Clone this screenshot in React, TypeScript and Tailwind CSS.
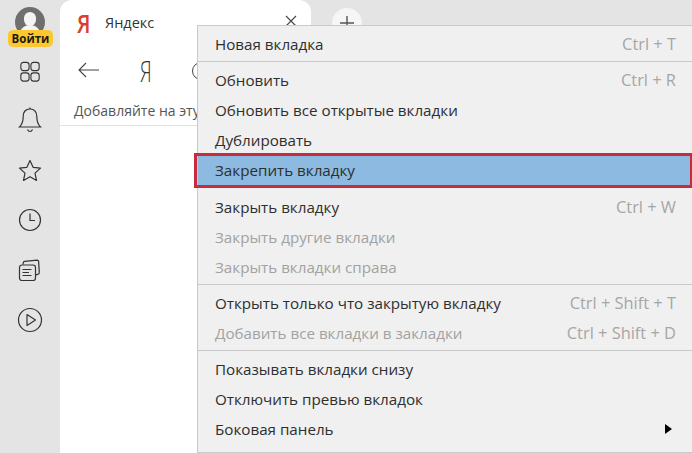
const font = "font-['Open_Sans',sans-serif]";

type Item = { label: string; shortcut?: string; disabled?: boolean; active?: boolean; arrow?: boolean };

const groups: { items: Item[]; line: boolean }[] = [
  { items: [{ label: "Новая вкладка", shortcut: "Ctrl + T" }], line: true },
  {
    items: [
      { label: "Обновить", shortcut: "Ctrl + R" },
      { label: "Обновить все открытые вкладки" },
      { label: "Дублировать" },
      { label: "Закрепить вкладку", active: true },
    ],
    line: false,
  },
  {
    items: [
      { label: "Закрыть вкладку", shortcut: "Ctrl + W" },
      { label: "Закрыть другие вкладки", disabled: true },
      { label: "Закрыть вкладки справа", disabled: true },
    ],
    line: true,
  },
  {
    items: [
      { label: "Открыть только что закрытую вкладку", shortcut: "Ctrl + Shift + T" },
      { label: "Добавить все вкладки в закладки", shortcut: "Ctrl + Shift + D", disabled: true },
    ],
    line: true,
  },
  {
    items: [
      { label: "Показывать вкладки снизу" },
      { label: "Отключить превью вкладок" },
      { label: "Боковая панель", arrow: true },
    ],
    line: false,
  },
];

const MenuRow = ({ item }: { item: Item }) => (
  <div
    className={`relative flex h-[30px] items-center justify-between pb-[2px] pl-[17px] pr-4 text-[15.200px] ${
      item.active ? "bg-[#8cbae0]" : ""
    } ${item.disabled ? "text-[#a2a2a2]" : "text-[#2e2e2e]"}`}
  >
    <span>{item.label}</span>
    {item.shortcut && <span className="text-[16.400px] text-[#a6a6a6]">{item.shortcut}</span>}
    {item.arrow && (
      <svg width="7" height="10" viewBox="0 0 7 10" className="mr-[4px]">
        <path d="M0 0l7 5-7 5z" fill="#000" />
      </svg>
    )}
    {item.active && (
      <div className="absolute -left-[4px] -right-[1px] -top-[3px] -bottom-[2px] border-[3px] border-[#c62c3e]" />
    )}
  </div>
);

const Sidebar = () => (
  <div className="flex w-[60px] shrink-0 flex-col items-center bg-[#e4e4e4] text-[#2b2b2b]">
    <div className="relative h-[50px] w-full">
      <div className="absolute left-[15px] top-[7px] h-[30px] w-[30px] overflow-hidden rounded-full bg-[#6f6f6f]">
        <div className="absolute left-[9px] top-[5px] h-[14px] w-[12px] rounded-full bg-[#f4f4f4]" />
        <div className="absolute left-[4px] top-[18px] h-[14px] w-[22px] rounded-t-full bg-[#f4f4f4]" />
      </div>
      <div className="absolute left-[8px] top-[30px] flex h-[17px] w-[45px] items-center justify-center rounded-[5px] bg-[#fdc82f] text-[11.500px] font-bold leading-none text-[#1e1a10]">
        Войти
      </div>
    </div>
    <svg width="22" height="22" viewBox="0 0 24 24" fill="none" stroke="#333" strokeWidth="1.2" className="mt-[11px]">
      <rect x="2" y="1.500" width="9" height="9" rx="2.800" />
      <rect x="13" y="1.500" width="9" height="9" rx="2.800" />
      <rect x="2" y="13" width="9" height="9" rx="2.800" />
      <rect x="13" y="13" width="9" height="9" rx="2.800" />
    </svg>
    <svg width="24" height="28" viewBox="0 0 24 28" fill="none" stroke="#333" strokeWidth="1.2" className="mt-[23px]">
      <path d="M12 3c-4.500 0-6.800 3.200-6.800 7.500 0 5-1.200 8-3.700 10.500h21c-2.500-2.500-3.700-5.500-3.700-10.500C18.800 6.200 16.500 3 12 3z" />
      <path d="M9.500 23.500c.6 1.500 1.400 2 2.500 2s1.900-.5 2.500-2" />
      <path d="M12 3V1.500" />
    </svg>
    <svg width="24" height="24" viewBox="0 0 24 24" fill="none" stroke="#333" strokeWidth="1.2" strokeLinejoin="round" className="mt-[25px]">
      <path d="M12 1.500l3.100 6.800 7.400.8-5.500 5 1.500 7.300-6.500-3.700-6.500 3.700 1.500-7.300-5.500-5 7.400-.8z" />
    </svg>
    <svg width="24" height="24" viewBox="0 0 24 24" fill="none" stroke="#333" strokeWidth="1.2" className="mt-[25px]">
      <circle cx="12" cy="12" r="10.500" />
      <path d="M12 5.500V12.500h5" />
    </svg>
    <svg width="24" height="24" viewBox="0 0 24 24" fill="none" stroke="#333" strokeWidth="1.2" strokeLinejoin="round" className="mt-[27px]">
      <rect x="1.500" y="6" width="16" height="15.500" rx="2.500" />
      <path d="M5 5.500l.3-1.800c.1-.7.6-1.200 1.300-1.300l12.500-1.200c.8 0 1.400.4 1.500 1.200l.7 11c.1 1-.5 1.700-1.500 1.900l-2 .5" />
      <path d="M4.500 10.500h9M4.500 13.500h6.500M4.500 16.500h9" />
    </svg>
    <svg width="26" height="26" viewBox="0 0 26 26" fill="none" stroke="#333" strokeWidth="1.2" strokeLinejoin="round" className="mt-[24px]">
      <circle cx="13" cy="13" r="11.500" />
      <path d="M10 7.500l8.500 5.500-8.500 5.500z" />
    </svg>
  </div>
);

export default function App() {
  return (
    <div className={`relative flex h-[453px] w-[692px] overflow-hidden bg-[#e4e4e4] ${font}`}>
      <Sidebar />
      <div className="flex min-w-0 flex-1 flex-col">
        {/* Вкладки */}
        <div className="flex h-[46px] shrink-0 items-start">
          <div className="flex h-full w-[251px] items-center rounded-t-[12px] bg-white pb-[1px] pl-[17px] pr-[14px]">
            <span className="w-[28px] origin-left scale-x-[0.8] text-[26px] font-semibold leading-none text-[#d8402f]">Я</span>
            <span className="flex-1 text-[14.500px] text-[#333]">Яндекс</span>
            <svg width="12" height="12" viewBox="0 0 12 12" stroke="#444" strokeWidth="1.100" className="-mt-[3px]">
              <path d="M1 1l10 10M11 1L1 11" />
            </svg>
          </div>
          <div className="ml-[21px] mt-[8px] flex h-[30px] w-[30px] items-center justify-center rounded-full bg-[#f6f6f6]">
            <svg width="14" height="14" viewBox="0 0 14 14" stroke="#555" strokeWidth="1.400">
              <path d="M7 0v14M0 7h14" />
            </svg>
          </div>
        </div>
        {/* Тулбар и закладки */}
        <div className="flex min-h-0 flex-1 flex-col bg-white">
          <div className="flex h-[50px] items-center pl-[18px]">
            <svg width="22" height="16" viewBox="0 0 22 16" fill="none" stroke="#444" strokeWidth="1.100" className="mt-[-2px]">
              <path d="M21 8H1M8 1L1 8l7 7" />
            </svg>
            <span className="ml-[40px] w-[16px] origin-left scale-x-[0.65] text-[30px] font-light leading-none text-[#333]">Я</span>
            <span className="ml-[36px] h-[18px] w-[18px] shrink-0 rounded-full border border-[#444]" />
          </div>
          <div className="flex h-[30px] items-center border-b border-[#e2e2e2] pl-[14px] text-[14px] text-[#555]">
            <span className="whitespace-nowrap">Добавляйте на эту</span>
          </div>
        </div>
      </div>
      {/* Контекстное меню */}
      <div className="absolute left-[197px] top-[25px] w-[495px] border-y border-l border-[#c9c9c9] bg-[#f0f0f0]">
        {groups.map((group, i) => (
          <div
            key={i}
            className={`pt-[4px] ${i === 1 ? "pb-[3px]" : i === 4 ? "pb-[7px]" : "pb-[1px]"} ${
              group.line ? "border-b border-[#c9c9c9]" : ""
            }`}
          >
            {group.items.map((item) => (
              <MenuRow key={item.label} item={item} />
            ))}
          </div>
        ))}
      </div>
    </div>
  );
}
